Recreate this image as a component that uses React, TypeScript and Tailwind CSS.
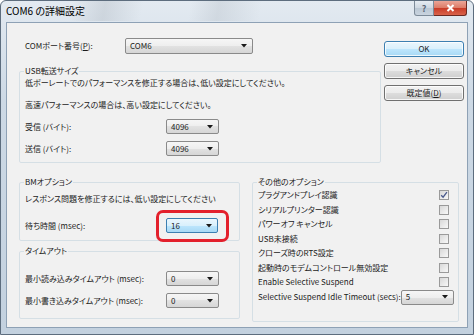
import clsx from 'clsx'

function Arrow() {
  return (
    <svg width="6" height="4" viewBox="0 0 6 4" className="shrink-0">
      <path d="M0 0h6L3 3.5z" fill="#1a1a1a" />
    </svg>
  )
}

function Combo({ value, className, hot = false }: { value: string; className: string; hot?: boolean }) {
  return (
    <div
      className={clsx(
        'flex shrink-0 items-center justify-between rounded-[2px] border pl-[4px] pr-[5px] leading-none',
        hot
          ? 'border-[#3c7fb1] bg-[linear-gradient(#eaf6fd,#d9f0fc_50%,#bee6fd_50%,#a7d9f5)]'
          : 'border-[#8a8a8a] bg-[linear-gradient(#f6f6f6,#eeeeee_50%,#e2e2e2_50%,#d6d6d6)]',
        className,
      )}
    >
      <span>{value}</span>
      <Arrow />
    </div>
  )
}

function Btn({ children, primary = false }: { children: React.ReactNode; primary?: boolean }) {
  return (
    <div
      className={clsx(
        'flex h-[16px] items-center justify-center rounded-[3px] border leading-none shadow-[inset_0_0_0_1px_rgba(255,255,255,0.8)]',
        primary
          ? 'border-[#3c7fb1] bg-[linear-gradient(#eaf6fd,#d9f0fc_50%,#bee6fd_50%,#a7d9f5)]'
          : 'border-[#707070] bg-[linear-gradient(#f2f2f2,#ebebeb_50%,#dddddd_50%,#cfcfcf)]',
      )}
    >
      {children}
    </div>
  )
}

function Check({ checked = false }: { checked?: boolean }) {
  return (
    <div className="flex size-[10px] shrink-0 items-center justify-center border border-[#9a9a9a] bg-[linear-gradient(135deg,#d8d8d8,#f8f8f8)]">
      {checked ? (
        <svg width="8" height="8" viewBox="0 0 8 8">
          <path d="M1.2 4.2 3.1 6.2 6.9 1.2" fill="none" stroke="#4a5a8c" strokeWidth="1.3" />
        </svg>
      ) : null}
    </div>
  )
}

function Group({ label, className, children }: { label: string; className: string; children: React.ReactNode }) {
  return (
    <fieldset className={clsx('min-w-0 rounded-[2px] border border-[#d5dfe5] pl-[5px]', className)}>
      <legend className="-ml-[1px] h-[12px] px-[1px] leading-[12px]">{label}</legend>
      {children}
    </fieldset>
  )
}

function FormRow({ label, value, className, hot = false }: { label: string; value: string; className: string; hot?: boolean }) {
  return (
    <div className={clsx('flex h-[15px] items-center', className)}>
      <span className="w-[141px] shrink-0 leading-none">{label}</span>
      {hot ? (
        <div className="relative">
          <Combo value={value} hot className="h-[15px] w-[52px]" />
          <div className="absolute -top-[8px] -right-[11px] -bottom-[9px] -left-[10px] rounded-[7px] border-[3px] border-[#e3202c]" />
        </div>
      ) : (
        <Combo value={value} className="h-[15px] w-[53px]" />
      )}
    </div>
  )
}

const options = [
  { label: 'プラグアンドプレイ認識', checked: true },
  { label: 'シリアルプリンター認識' },
  { label: 'パワーオフ キャンセル' },
  { label: 'USB未接続' },
  { label: 'クローズ時のRTS設定' },
  { label: '起動時のモデムコントロール無効設定' },
  { label: 'Enable Selective Suspend' },
]

export default function App() {
  return (
    <div className="flex h-[335px] w-[474px] flex-col overflow-hidden rounded-t-[6px] border border-[#5d6d7e] bg-[linear-gradient(180deg,#e3eaf1,#cdd9e5_30%,#c3d1df)] font-['Noto_Sans_CJK_JP',sans-serif] text-[8px] text-[#1b1b1b] [font-feature-settings:'palt']">
      <div className="flex h-[20px] shrink-0 items-start bg-[linear-gradient(100deg,transparent_15%,rgba(120,130,140,0.18)_22%,transparent_30%,transparent_40%,rgba(120,130,140,0.15)_46%,transparent_55%)]">
        <span className="mt-[3px] ml-[5px] text-[10px] leading-[13px] text-black">COM6 の詳細設定</span>
        <div className="mr-[6px] ml-auto flex">
          <div className="flex h-[15px] w-[20px] items-center justify-center rounded-bl-[3px] border border-t-0 border-[#7d8b99] bg-[linear-gradient(#e6ecf2,#cdd7e1_50%,#bac7d4_50%,#c9d4df)] text-[9px] leading-none font-bold text-[#5a6877]">
            ?
          </div>
          <div className="flex h-[15px] w-[33px] items-center justify-center rounded-br-[3px] border border-t-0 border-l-0 border-[#6b2a22] bg-[linear-gradient(#eba597,#dc7a66_50%,#c83a26_50%,#d9634b)]">
            <svg width="9" height="8" viewBox="0 0 9 8">
              <path d="M1.5 1 7.5 7M7.5 1 1.5 7" stroke="#fff" strokeWidth="2" />
            </svg>
          </div>
        </div>
      </div>

      <div className="mx-[5px] mt-[1px] mb-[6px] flex flex-1 flex-col border border-[#8ea1b5] bg-[#f1f1f1]">
        <div className="flex pt-[15px]">
          <div className="ml-[12px] w-[362px] shrink-0">
            <div className="flex h-[16px] items-center pl-[6px]">
              <span className="w-[100px] shrink-0 leading-none">
                COMポート番号(<span className="underline">P</span>):
              </span>
              <Combo value="COM6" className="h-[16px] w-[128px]" />
            </div>
            <Group label="USB転送サイズ" className="mt-[11px] pb-[6px]">
              <p className="h-[12px] leading-[12px]">低ボーレートでのパフォーマンスを修正する場合は、低い設定にしてください。</p>
              <p className="mt-[10px] h-[12px] leading-[12px]">高速パフォーマンスの場合は、高い設定にしてください。</p>
              <FormRow label="受信 (バイト):" value="4096" className="mt-[8px]" />
              <FormRow label="送信 (バイト):" value="4096" className="mt-[7px]" />
            </Group>
          </div>
          <div className="mt-[3px] ml-[3px] flex w-[80px] shrink-0 flex-col gap-[6px]">
            <Btn primary>OK</Btn>
            <Btn>キャンセル</Btn>
            <Btn>
              既定値(<span className="underline">D</span>)
            </Btn>
          </div>
        </div>

        <div className="mt-[13px] flex">
          <div className="ml-[12px] w-[221px] shrink-0">
            <Group label="BMオプション" className="pb-[7px]">
              <p className="mt-[5px] h-[12px] leading-[12px]">レスポンス問題を修正するには、低い設定にしてください</p>
              <FormRow label="待ち時間 (msec):" value="16" hot className="mt-[13px]" />
            </Group>
            <Group label="タイムアウト" className="mt-[4px] pb-[10px]">
              <FormRow label="最小読み込みタイムアウト (msec):" value="0" className="mt-[14px]" />
              <FormRow label="最小書き込みタイムアウト (msec):" value="0" className="mt-[7px]" />
            </Group>
          </div>
          <Group label="その他のオプション" className="ml-[12px] w-[207px] shrink-0 pr-[9px] pb-[16px]">
            {options.map((o) => (
              <div key={o.label} className="flex h-[14.5px] items-center justify-between">
                <span className="leading-none whitespace-nowrap">{o.label}</span>
                <Check checked={o.checked} />
              </div>
            ))}
            <div className="flex h-[15px] items-center">
              <span className="leading-none whitespace-nowrap">Selective Suspend Idle Timeout (secs):</span>
              <Combo value="5" className="-mr-[2px] ml-auto h-[15px] w-[53px]" />
            </div>
          </Group>
        </div>
      </div>
    </div>
  )
}
